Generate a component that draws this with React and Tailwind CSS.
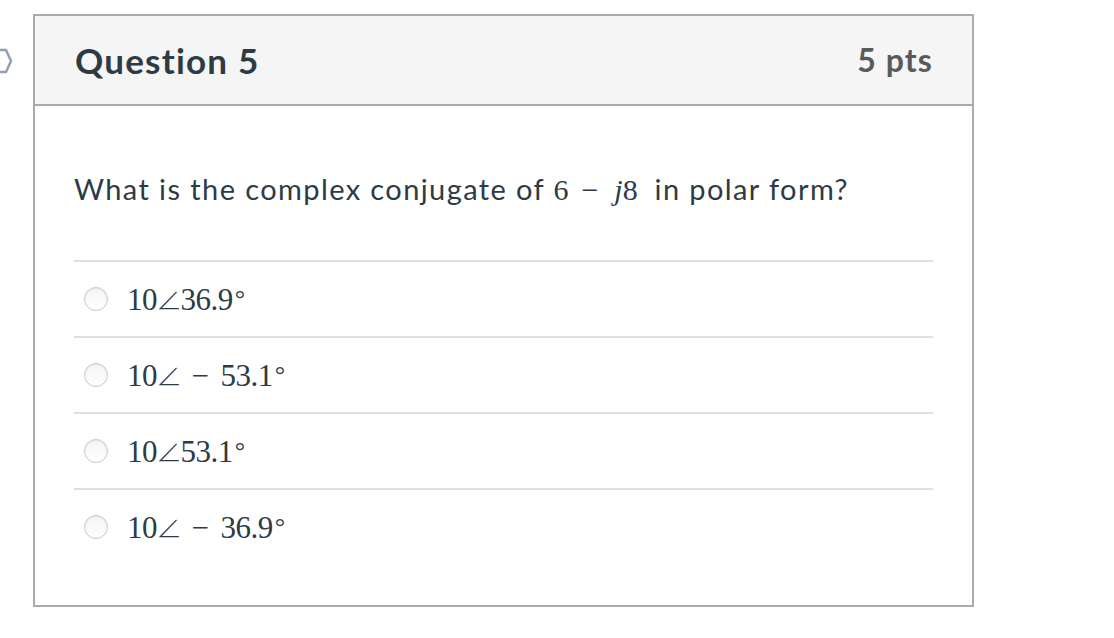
export default function App() {
  const options = [
    { id: "a", angle: "36.9", neg: false },
    { id: "b", angle: "53.1", neg: true },
    { id: "c", angle: "53.1", neg: false },
    { id: "d", angle: "36.9", neg: true },
  ];

  const serif = { fontFamily: "'Liberation Serif', 'Times New Roman', serif" };

  return (
    <div className="min-h-screen bg-white flex items-start pt-[14px]" style={{ fontFamily: "Lato, 'Noto Sans', sans-serif" }}>
      {/* left toggle chevron */}
      <div className="w-[33px] shrink-0 pt-[33px]">
        <svg width="16" height="28" viewBox="0 0 16 28" className="-ml-[3px]">
          <path d="M2 3 L9 3 L14 14 L9 25 L2 25" fill="none" stroke="#8ea0b4" strokeWidth="2.5" strokeLinejoin="round" />
        </svg>
      </div>

      <div className="w-[941px] border-2 border-[#aaaaaa] bg-white">
        <div className="h-[90px] bg-[#f5f5f5] border-b-2 border-[#aaaaaa] flex items-center justify-between px-[40px]">
          <h2 className="text-[35px] font-bold text-[#2d3b45] leading-none tracking-[1.2px]">Question 5</h2>
          <span className="text-[32px] font-bold text-[#5a5a5a] leading-none tracking-[1.1px] -mr-[1px]">5 pts</span>
        </div>

        <div className="px-[39px] pt-[68px] pb-[41px]">
          <p className="text-[29px] text-[#2d3b45] leading-none mb-[55px] tracking-[1.4px]">
            What is the complex conjugate of{" "}
            <span style={serif} className="text-[30px] tracking-normal mr-[8px]">
              6<span className="ml-[13px] mr-[16px]">−</span><i>j</i>8
            </span>{" "}
            in polar form?
          </p>

          {options.map((o) => (
            <div key={o.id} className="h-[76px] border-t-2 border-[#e0e0e0] flex items-center pl-[10px] gap-[19px]">
              <span className="w-[24px] h-[24px] rounded-full border border-[#c8c8c8] bg-gradient-to-b from-[#f4f4f4] to-white shadow-[inset_0_1px_2px_rgba(0,0,0,0.08)]" />
              <span className="text-[31px] text-[#2d3b45] leading-none tracking-[-0.5px] flex items-baseline" style={serif}>
                10
                <span className="text-[26px] leading-none -mx-[1px]" style={{ fontFamily: "'Noto Sans CJK JP', 'DejaVu Sans', sans-serif", fontWeight: 300 }}>∠</span>
                {o.neg && <span className="ml-[11px] mr-[12px]">−</span>}
                {o.angle}
                <span className="text-[26px] ml-[2px] relative -top-[3px]">°</span>
              </span>
            </div>
          ))}
        </div>
      </div>
    </div>
  );
}
